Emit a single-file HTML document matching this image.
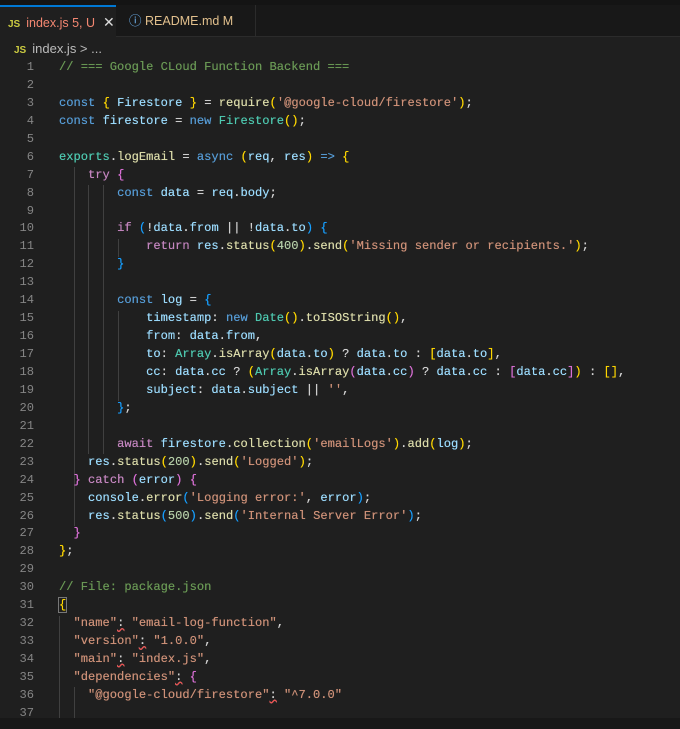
<!DOCTYPE html>
<html><head><meta charset="utf-8"><style>
*{margin:0;padding:0;box-sizing:border-box}
body{width:680px;height:729px;background:#1f1f1f;overflow:hidden;position:relative;font-family:"Liberation Sans",sans-serif}
.top{position:absolute;left:0;top:0;width:680px;height:5px;background:#141414}
.tabs{position:absolute;left:0;top:5px;width:680px;height:32px;background:#181818;border-bottom:1px solid #2b2b2b}
.tab{position:absolute;top:0;height:32px;font-size:12.5px;line-height:32px;white-space:nowrap}
.t1{left:0;width:116px;background:#1f1f1f;border-top:2px solid #0078d4;line-height:30px}
.t2{left:117px;width:139px;border-right:1px solid #2b2b2b}
.js{color:#cbcb41;font-weight:bold;font-size:10px;margin-right:6px}
.bc{position:absolute;left:14px;top:40px;font-size:13px;color:#bbb;line-height:18px}
.code{position:absolute;left:0;top:59px;font-family:"Liberation Mono",monospace;font-size:12.1px;line-height:17.94px;white-space:pre}
.ln{position:absolute;left:0;width:34px;text-align:right;color:#858585}
.cl{position:absolute;left:59px;color:#d4d4d4;text-shadow:0 0 0.4px currentColor}
.k{color:#569cd6}.c{color:#c586c0}.v{color:#9cdcfe}.f{color:#dcdcaa}.s{color:#ce9178}.m{color:#6a9955}.n{color:#b5cea8}.t{color:#4ec9b0}.y{color:#ffd700}.p{color:#da70d6}.b{color:#179fff}
.sq{text-decoration:underline wavy #f14c4c}
.g{position:absolute;width:1px;background:#404040}
.bot{position:absolute;left:0;top:718px;width:680px;height:11px;background:#181818}
</style></head><body>
<div class="top"></div>
<div class="tabs">
<div class="tab t1"><span style="margin-left:8px" class="js">JS</span><span style="color:#f48771">index.js 5, U</span><span style="color:#ddd;margin-left:8px;font-size:14px">✕</span></div>
<div class="tab t2"><span style="margin-left:12px;color:#75beff">ⓘ</span> <span style="color:#e2c08d">README.md M</span></div>
</div>
<div class="bc"><span class="js">JS</span>index.js &gt; ...</div>
<div class="g" style="left:74px;top:167px;height:359px"></div>
<div class="g" style="left:88px;top:185px;height:269px"></div>
<div class="g" style="left:103px;top:185px;height:269px"></div>
<div class="g" style="left:118px;top:239px;height:18px"></div>
<div class="g" style="left:118px;top:311px;height:90px"></div>
<div class="g" style="left:74px;top:490px;height:36px"></div>
<div class="g" style="left:59px;top:616px;height:102px"></div>
<div class="g" style="left:74px;top:687px;height:31px"></div>
<div class="code" id="c"></div>
<div class="bot"></div>
<script>
const L=[
'<span class="m">// === Google CLoud Function Backend ===</span>',
'',
'<span class="k">const</span> <span class="y">{</span> <span class="v">Firestore</span> <span class="y">}</span> = <span class="f">require</span><span class="y">(</span><span class="s">\'@google-cloud/firestore\'</span><span class="y">)</span>;',
'<span class="k">const</span> <span class="v">firestore</span> = <span class="k">new</span> <span class="t">Firestore</span><span class="y">()</span>;',
'',
'<span class="t">exports</span>.<span class="f">logEmail</span> = <span class="k">async</span> <span class="y">(</span><span class="v">req</span>, <span class="v">res</span><span class="y">)</span> <span class="k">=&gt;</span> <span class="y">{</span>',
'    <span class="c">try</span> <span class="p">{</span>',
'        <span class="k">const</span> <span class="v">data</span> = <span class="v">req</span>.<span class="v">body</span>;',
'',
'        <span class="c">if</span> <span class="b">(</span>!<span class="v">data</span>.<span class="v">from</span> || !<span class="v">data</span>.<span class="v">to</span><span class="b">)</span> <span class="b">{</span>',
'            <span class="c">return</span> <span class="v">res</span>.<span class="f">status</span><span class="y">(</span><span class="n">400</span><span class="y">)</span>.<span class="f">send</span><span class="y">(</span><span class="s">\'Missing sender or recipients.\'</span><span class="y">)</span>;',
'        <span class="b">}</span>',
'',
'        <span class="k">const</span> <span class="v">log</span> = <span class="b">{</span>',
'            <span class="v">timestamp</span>: <span class="k">new</span> <span class="t">Date</span><span class="y">()</span>.<span class="f">toISOString</span><span class="y">()</span>,',
'            <span class="v">from</span>: <span class="v">data</span>.<span class="v">from</span>,',
'            <span class="v">to</span>: <span class="t">Array</span>.<span class="f">isArray</span><span class="y">(</span><span class="v">data</span>.<span class="v">to</span><span class="y">)</span> ? <span class="v">data</span>.<span class="v">to</span> : <span class="y">[</span><span class="v">data</span>.<span class="v">to</span><span class="y">]</span>,',
'            <span class="v">cc</span>: <span class="v">data</span>.<span class="v">cc</span> ? <span class="y">(</span><span class="t">Array</span>.<span class="f">isArray</span><span class="p">(</span><span class="v">data</span>.<span class="v">cc</span><span class="p">)</span> ? <span class="v">data</span>.<span class="v">cc</span> : <span class="p">[</span><span class="v">data</span>.<span class="v">cc</span><span class="p">]</span><span class="y">)</span> : <span class="y">[]</span>,',
'            <span class="v">subject</span>: <span class="v">data</span>.<span class="v">subject</span> || <span class="s">\'\'</span>,',
'        <span class="b">}</span>;',
'',
'        <span class="c">await</span> <span class="v">firestore</span>.<span class="f">collection</span><span class="y">(</span><span class="s">\'emailLogs\'</span><span class="y">)</span>.<span class="f">add</span><span class="y">(</span><span class="v">log</span><span class="y">)</span>;',
'    <span class="v">res</span>.<span class="f">status</span><span class="y">(</span><span class="n">200</span><span class="y">)</span>.<span class="f">send</span><span class="y">(</span><span class="s">\'Logged\'</span><span class="y">)</span>;',
'  <span class="p">}</span> <span class="c">catch</span> <span class="p">(</span><span class="v">error</span><span class="p">)</span> <span class="p">{</span>',
'    <span class="v">console</span>.<span class="f">error</span><span class="b">(</span><span class="s">\'Logging error:\'</span>, <span class="v">error</span><span class="b">)</span>;',
'    <span class="v">res</span>.<span class="f">status</span><span class="b">(</span><span class="n">500</span><span class="b">)</span>.<span class="f">send</span><span class="b">(</span><span class="s">\'Internal Server Error\'</span><span class="b">)</span>;',
'  <span class="p">}</span>',
'<span class="y">}</span>;',
'',
'<span class="m">// File: package.json</span>',
'<span class="y" style="outline:1px solid #777">{</span>',
'  <span class="s">"name"</span><span class="sq">:</span> <span class="s">"email-log-function"</span>,',
'  <span class="s">"version"</span><span class="sq">:</span> <span class="s">"1.0.0"</span>,',
'  <span class="s">"main"</span><span class="sq">:</span> <span class="s">"index.js"</span>,',
'  <span class="s">"dependencies"</span><span class="sq">:</span> <span class="p">{</span>',
'    <span class="s">"@google-cloud/firestore"</span><span class="sq">:</span> <span class="s">"^7.0.0"</span>',
''];
let h='';L.forEach((l,i)=>{const t=(i*17.94).toFixed(2);h+=`<div class="ln" style="top:${t}px">${i+1}</div><div class="cl" style="top:${t}px">${l}</div>`});
document.getElementById('c').innerHTML=h;
</script>
</body></html>
